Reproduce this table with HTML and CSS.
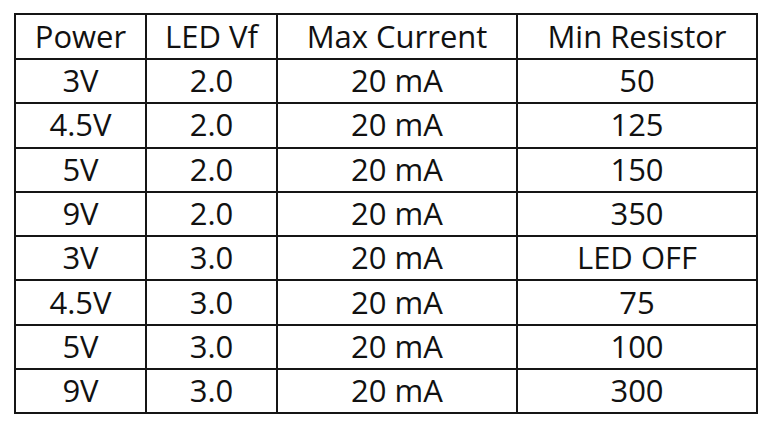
FILE: index.html
```html
<!DOCTYPE html>
<html>
<head>
<meta charset="utf-8">
<link rel="stylesheet" href="styles.css">
</head>
<body>
<table class="led-table">
  <colgroup>
    <col class="c1"><col class="c2"><col class="c3"><col class="c4">
  </colgroup>
  <tr class="head"><td>Power</td><td>LED Vf</td><td>Max Current</td><td>Min Resistor</td></tr>
  <tr><td>3V</td><td>2.0</td><td>20 mA</td><td>50</td></tr>
  <tr><td>4.5V</td><td>2.0</td><td>20 mA</td><td>125</td></tr>
  <tr><td>5V</td><td>2.0</td><td>20 mA</td><td>150</td></tr>
  <tr><td>9V</td><td>2.0</td><td>20 mA</td><td>350</td></tr>
  <tr><td>3V</td><td>3.0</td><td>20 mA</td><td>LED OFF</td></tr>
  <tr><td>4.5V</td><td>3.0</td><td>20 mA</td><td>75</td></tr>
  <tr><td>5V</td><td>3.0</td><td>20 mA</td><td>100</td></tr>
  <tr><td>9V</td><td>3.0</td><td>20 mA</td><td>300</td></tr>
</table>
</body>
</html>
```
FILE: styles.css
```css
html, body {
  margin: 0;
  background: #fff;
}
body {
  padding: 13px 0 0 14px;
  font-family: "Open Sans", Lato, sans-serif;
  color: #111;
}
.led-table {
  border-collapse: collapse;
  table-layout: fixed;
  width: 744px;
}
.c1 { width: 131px; }
.c2 { width: 131px; }
.c3 { width: 240px; }
.c4 { width: 240px; }
.led-table td {
  border: 2px solid #151515;
  height: 41.3px;
  padding: 0 0 1px;
  text-align: center;
  vertical-align: middle;
  font-size: 31px;
  line-height: 1;
}
.led-table .head td {
  height: 42px;
}
```
